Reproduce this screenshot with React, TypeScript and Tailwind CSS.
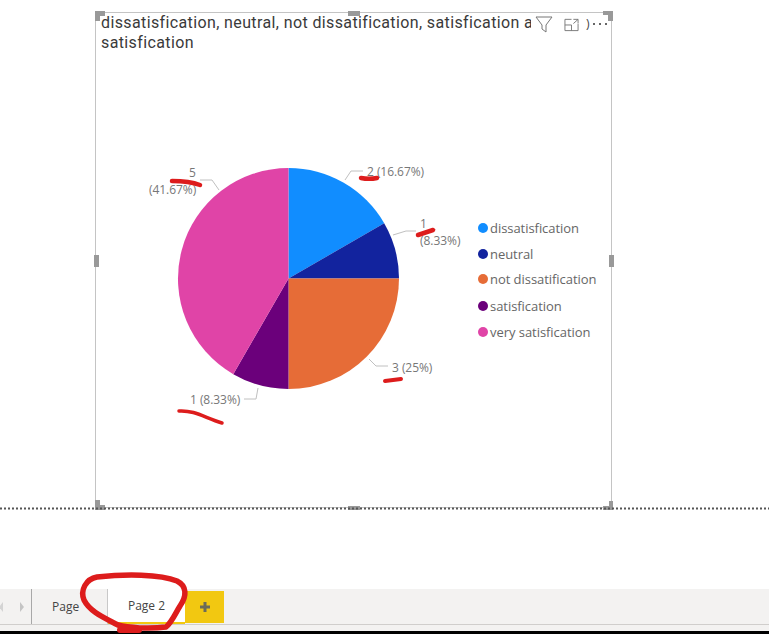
const slices = [
  { name: "dissatisfication", color: "#118DFF", d: "M288.5 278.5 L288.5 168 A110.5 110.5 0 0 1 384.2 223.25 Z", y: 228 },
  { name: "neutral", color: "#12239E", d: "M288.5 278.5 L384.2 223.25 A110.5 110.5 0 0 1 399 278.5 Z", y: 254 },
  { name: "not dissatification", color: "#E66C37", d: "M288.5 278.5 L399 278.5 A110.5 110.5 0 0 1 288.5 389 Z", y: 279 },
  { name: "satisfication", color: "#6B007B", d: "M288.5 278.5 L288.5 389 A110.5 110.5 0 0 1 233.25 374.2 Z", y: 306 },
  { name: "very satisfication", color: "#E044A7", d: "M288.5 278.5 L233.25 374.2 A110.5 110.5 0 0 1 288.5 168 Z", y: 332 },
];
const labels = [
  { x: 367, y: 176, t: "2 (16.67%)" },
  { x: 420, y: 228, t: "1" },
  { x: 420, y: 245, t: "(8.33%)" },
  { x: 392, y: 372, t: "3 (25%)" },
  { x: 190, y: 404, t: "1 (8.33%)" },
  { x: 189, y: 177, t: "5" },
  { x: 149, y: 194, t: "(41.67%)" },
];
const leaders = [
  "M345 180 L351 171 L363 171",
  "M393 235 L406 231 L416 231",
  "M369 359 L376 366 L388 366",
  "M258 388 L256 399 L244 399",
  "M200 180 L212 180 L219 190",
];
const handles = ["w-[10px] h-[5px] top-[-2px] left-[-1px]", "w-[5px] h-[10px] top-[-2px] left-[-1px]", "w-[12px] h-[5px] top-[-2px] left-[252px]", "w-[10px] h-[5px] top-[-2px] right-[-2px]", "w-[5px] h-[10px] top-[-2px] right-[-2px]", "w-[5px] h-[12px] top-[242px] left-[-2px]", "w-[5px] h-[12px] top-[242px] right-[-3px]", "w-[10px] h-[5px] bottom-[-3px] left-[-1px]", "w-[5px] h-[10px] bottom-[-3px] left-[-1px]", "w-[12px] h-[4px] bottom-[-3px] left-[252px]", "w-[10px] h-[4px] bottom-[-3px] right-[-2px]", "w-[4px] h-[9px] bottom-[-3px] right-[-2px]"];

export default function App() {
  return (
    <div className="relative flex h-[634px] w-[769px] flex-col overflow-hidden bg-white font-['Open_Sans',sans-serif]">
      <main className="h-[589px] shrink-0 pl-[95px] pt-[12px]">
        <section className="relative h-[496px] w-[517px] border border-[#c4c4c4]">
          {handles.map((h) => (
            <span key={h} className={`absolute bg-[#999999] ${h}`} />
          ))}
          <h1 className="pl-[5px] font-['Roboto',sans-serif] text-[16px] leading-[20px] tracking-[0.38px] text-[#3a3a3a]">
            <span className="block whitespace-nowrap">dissatisfication, neutral, not dissatification, satisfication a</span>
            <span className="block">satisfication</span>
          </h1>
          <div className="absolute right-[3px] top-[2px] flex items-start bg-white pl-[4px] text-[#666666]">
            <svg width="18" height="18" viewBox="0 0 18 18" fill="none" stroke="#777777" strokeWidth="1" className="mr-[11px]">
              <path d="M1 2 H17 L11 10 V17 L7 14 V10 Z" />
            </svg>
            <svg width="15" height="15" viewBox="0 0 16 16" fill="none" stroke="#777777" strokeWidth="1" className="mr-[7px] mt-[2px]">
              <path d="M8 2.5 H1 V14.5 H15 V7.5 M1 8.5 H8 V14.5 M10 2.5 H15 V7 M15 2.5 L10 7" />
            </svg>
            <span className="mr-[3px] mt-[1px] w-[3px] text-[12px] leading-[16px] text-[#444444]">)</span>
            <svg width="16" height="16" viewBox="0 0 16 16" fill="#666666" className="mt-[1px]">
              <rect x="1" y="7" width="2" height="2" />
              <rect x="7" y="7" width="2" height="2" />
              <rect x="13" y="7" width="2" height="2" />
            </svg>
          </div>
        </section>
      </main>
      <footer className="flex h-[36px] shrink-0 items-stretch border-b border-[#d0cecc] bg-[#f3f2f1]">
        <div className="flex w-[32px] items-center justify-end gap-[17px] border-r border-[#a8a8a8] pr-[7px]">
          <span className="h-0 w-0 border-y-[5px] border-r-[4px] border-y-transparent border-r-[#d4d4d4]" />
          <span className="h-0 w-0 border-y-[5px] border-l-[4px] border-y-transparent border-l-[#c4c4c4]" />
        </div>
        <div className="flex w-[76px] items-center border-r border-[#c8c8c8] pl-[20px] text-[12px] text-[#444444]">Page</div>
        <div className="flex w-[77px] items-center justify-center border-b-[2px] border-[#f2c811] bg-white text-[12px] text-[#444444]">Page 2</div>
        <div className="mb-[1px] mt-[2px] flex w-[39px] items-center justify-center bg-[#f2c811]">
          <svg width="12" height="12" viewBox="0 0 12 12" fill="#6b6b5a">
            <rect x="4.5" y="1" width="3" height="10" />
            <rect x="1" y="4.5" width="10" height="3" />
          </svg>
        </div>
      </footer>
      <div className="h-[6px] shrink-0 bg-[#f3f2f1]" />
      <div className="h-[3px] shrink-0 bg-black" />

      <svg className="pointer-events-none absolute left-0 top-0" width="769" height="634" viewBox="0 0 769 634" fill="none">
        {slices.map((s) => (
          <path key={s.name} d={s.d} fill={s.color} />
        ))}
        {leaders.map((d) => (
          <path key={d} d={d} stroke="#c0c0c0" strokeWidth="1" />
        ))}
        <g fontSize="12" fill="#777777" letterSpacing="-0.05">
          {labels.map((l) => (
            <text key={l.t} x={l.x} y={l.y}>{l.t}</text>
          ))}
        </g>
        {slices.map((s) => (
          <g key={s.name}>
            <circle cx="483" cy={s.y} r="5" fill={s.color} />
            <text x="490" y={s.y + 4.5} fontSize="13" letterSpacing="-0.05" fill="#666666">{s.name}</text>
          </g>
        ))}
        <path d="M0 508.5 H769" stroke="#555555" strokeWidth="2" strokeDasharray="2 2" />
        <g stroke="#dd1c1c" strokeLinecap="round" strokeLinejoin="round">
          <path d="M172 181 C180 181 192 182 200 185" strokeWidth="4.5" />
          <path d="M361 178 C366 179 372 179 377 178" strokeWidth="4.5" />
          <path d="M418 235 L433 230" strokeWidth="4.5" />
          <path d="M385 381 L401 379" strokeWidth="4" />
          <path d="M179 411 C195 410 205 418 222 423" strokeWidth="3.5" />
          <path d="M97 577 C125 574 160 574 177 581 C187 586 187 596 180 606 C175 614 172 622 166 627 C150 629 128 628 118 625 C105 618 90 612 84 600 C80 590 86 579 97 577 Z" strokeWidth="5.5" />
          <path d="M120 630 L139 630" strokeWidth="6" />
        </g>
      </svg>
    </div>
  );
}
